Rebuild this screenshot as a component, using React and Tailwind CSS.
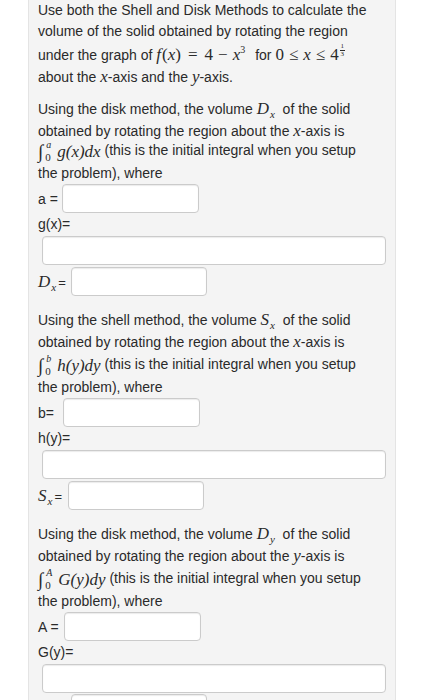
import React from "react";

const Serif = ({ children, className = "" }) => (
  <span className={"font-['Liberation_Serif',serif] " + className}>{children}</span>
);

const Sub = ({ base, sub }) => (
  <span className="whitespace-nowrap">
    <Serif className="italic text-[17px]">{base}</Serif>
    <Serif className="italic text-[11px] relative top-[4px] ml-[1px]">{sub}</Serif>
  </span>
);

const Integral = ({ upper, body }) => (
  <span className="inline-flex items-center align-middle whitespace-nowrap">
    <Serif className="italic text-[19px] leading-none">∫</Serif>
    <span className="inline-flex flex-col leading-none ml-[2px]">
      <Serif className="italic text-[10px] leading-[11px] ml-[1px]">{upper}</Serif>
      <Serif className="text-[11px] leading-[12px] mt-[1px]">0</Serif>
    </span>
    <Serif className="italic text-[17px] ml-[6px]">{body}</Serif>
  </span>
);

const Box = ({ className = "" }) => (
  <input
    type="text"
    className={
      "block h-[29px] bg-white border border-[#cbcbcb] rounded-[4px] shadow-[inset_0_1px_1px_rgba(0,0,0,0.08)] outline-none " +
      className
    }
  />
);

const Line = ({ children, className = "h-[21px]" }) => (
  <div className={"whitespace-nowrap leading-[21px] flex items-end " + className}>
    <span>{children}</span>
  </div>
);

const ShortRow = ({ label, labelW }) => (
  <div className="flex items-center h-[29px]">
    <div className={"leading-none " + labelW}>{label}</div>
    <Box className="w-[137px]" />
  </div>
);

export default function App() {
  return (
    <div className="w-[424px] h-[700px] bg-white overflow-hidden">
      <div className="ml-[28px] w-[368px] h-full bg-[#f4f4f4] border-x border-[#e4e4e4] pl-[9px] text-[14px] text-[#2a2a2a] font-['Liberation_Sans',Arial,sans-serif]">
        {/* intro */}
        <div>
          <Line>Use both the Shell and Disk Methods to calculate the</Line>
          <Line>volume of the solid obtained by rotating the region</Line>
          <Line className="h-[25px]">
            under the graph of{" "}
            <Serif className="text-[17px]">
              <span className="italic">f</span>
              <span className="ml-[1px]">(</span>
              <span className="italic">x</span>
              <span>)</span>
              <span className="mx-[7px]">=</span>
              <span>4</span>
              <span className="mx-[5px]">−</span>
              <span className="italic">x</span>
              <span className="text-[10px] relative top-[-7px]">3</span>
            </Serif>
            <span className="ml-[10px]">for</span>{" "}
            <Serif className="text-[17px]">
              <span>0</span>
              <span className="mx-[5px]">≤</span>
              <span className="italic">x</span>
              <span className="mx-[5px]">≤</span>
              <span>4</span>
            </Serif>
            <span className="inline-flex flex-col items-center leading-none text-[7px] font-['Liberation_Serif',serif] align-text-top relative top-[-4px] ml-[1px]">
              <span className="leading-[7px]">1</span>
              <span className="w-[5px] h-px bg-[#2a2a2a]" />
              <span className="leading-[7px]">3</span>
            </span>
          </Line>
          <Line>
            about the <Serif className="italic text-[17px]">x</Serif>-axis and the{" "}
            <Serif className="italic text-[17px]">y</Serif>-axis.
          </Line>
        </div>

        {/* disk x */}
        <div className="mt-[12px]">
          <Line>
            Using the disk method, the volume <Sub base="D" sub="x" /> &nbsp;of the solid
          </Line>
          <Line>
            obtained by rotating the region about the <Serif className="italic text-[17px]">x</Serif>-axis is
          </Line>
          <Line>
            <Integral upper="a" body="g(x)dx" /> (this is the initial integral when you setup
          </Line>
          <Line>the problem), where</Line>
        </div>
        <ShortRow label="a =" labelW="w-[24px]" />
        <div className="h-[21px] mt-[1px] leading-[21px]">g(x)=</div>
        <Box className="w-[344px] ml-[4px] mt-[1px]" />
        <div className="flex items-center h-[29px] mt-[2px]">
          <div className="w-[33px] leading-none whitespace-nowrap">
            <Sub base="D" sub="x" />
            <span className="text-[13px] ml-[2px]">=</span>
          </div>
          <Box className="w-[136px]" />
        </div>

        {/* shell x */}
        <div className="mt-[15px]">
          <Line>
            Using the shell method, the volume <Sub base="S" sub="x" /> &nbsp;of the solid
          </Line>
          <Line>
            obtained by rotating the region about the <Serif className="italic text-[17px]">x</Serif>-axis is
          </Line>
          <Line className="h-[24px]">
            <Integral upper="b" body="h(y)dy" /> (this is the initial integral when you setup
          </Line>
          <Line>the problem), where</Line>
        </div>
        <ShortRow label="b=" labelW="w-[25px]" />
        <div className="h-[21px] mt-[1px] leading-[21px]">h(y)=</div>
        <Box className="w-[344px] ml-[4px] mt-[1px]" />
        <div className="flex items-center h-[29px] mt-[2px]">
          <div className="w-[30px] leading-none whitespace-nowrap">
            <Sub base="S" sub="x" />
            <span className="text-[13px] ml-[2px]">=</span>
          </div>
          <Box className="w-[136px]" />
        </div>

        {/* disk y */}
        <div className="mt-[15px]">
          <Line>
            Using the disk method, the volume <Sub base="D" sub="y" /> &nbsp;of the solid
          </Line>
          <Line>
            obtained by rotating the region about the <Serif className="italic text-[17px]">y</Serif>-axis is
          </Line>
          <Line className="h-[24px]">
            <Integral upper="A" body="G(y)dy" /> (this is the initial integral when you setup
          </Line>
          <Line>the problem), where</Line>
        </div>
        <ShortRow label="A =" labelW="w-[26px]" />
        <div className="h-[21px] mt-[1px] leading-[21px]">G(y)=</div>
        <Box className="w-[344px] ml-[4px] mt-[1px]" />
        <div className="flex items-center h-[29px] mt-[1px]">
          <div className="w-[33px]" />
          <Box className="w-[136px]" />
        </div>
      </div>
    </div>
  );
}
